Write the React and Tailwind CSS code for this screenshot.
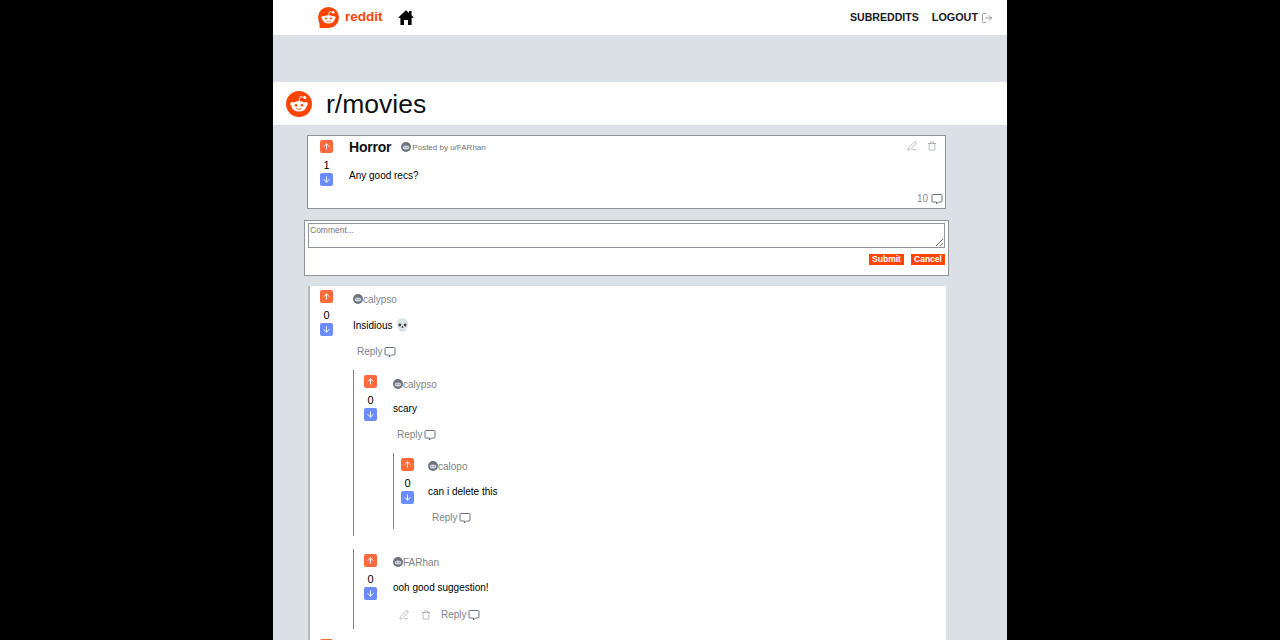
import React from "react";
import { ArrowUp, ArrowDown, PenLine, Trash, LogOut } from "lucide-react";

function Snoo({ size, bubble }) {
  return (
    <svg width={size} height={size} viewBox="0 0 40 40">
      <circle cx="20" cy="20" r="20" fill="#ff4500" />
      {bubble && <path d="M3 24 L3 39 Q3 40 5 40 L22 40 Z" fill="#ff4500" />}
      <circle cx="9.5" cy="20" r="3" fill="#fff" />
      <circle cx="30.5" cy="20" r="3" fill="#fff" />
      <ellipse cx="20" cy="23.5" rx="11.5" ry="8" fill="#fff" />
      <path d="M20 16 L22 8.5 L28 10" fill="none" stroke="#fff" strokeWidth="1.4" />
      <circle cx="29" cy="10" r="2.4" fill="#fff" />
      <circle cx="15.5" cy="22" r="2" fill="#ff4500" />
      <circle cx="24.5" cy="22" r="2" fill="#ff4500" />
      <path d="M15.5 27 Q20 29.5 24.5 27" fill="none" stroke="#ff4500" strokeWidth="1.2" />
    </svg>
  );
}

function HomeIcon() {
  return (
    <svg width="16" height="15" viewBox="0 0 16 15" fill="#000" className="ml-[15px]">
      <path d="M8 0.3 L11 3 V1 H13.5 V5.3 L16 7.8 H13.6 V15 H10 V10 H6 V15 H2.4 V7.8 H0 Z" />
    </svg>
  );
}

function UserDot() {
  return (
    <svg width="10" height="10" viewBox="0 0 20 20" className="shrink-0 mt-[-2px]">
      <circle cx="10" cy="10" r="10" fill="#6b7280" />
      <ellipse cx="10" cy="11" rx="6.5" ry="4" fill="#d1d5db" />
      <circle cx="7.5" cy="10.5" r="1.1" fill="#6b7280" />
      <circle cx="12.5" cy="10.5" r="1.1" fill="#6b7280" />
    </svg>
  );
}

function Bubble({ className }) {
  return (
    <svg width="12" height="12" viewBox="0 0 12 12" fill="none" stroke="currentColor" strokeWidth="1" className={className}>
      <path d="M2 1.5 H10 Q11 1.5 11 2.5 V8 Q11 9 10 9 H7.5 L5.5 11 V9 H2 Q1 9 1 8 V2.5 Q1 1.5 2 1.5 Z" />
    </svg>
  );
}

function UpButton() {
  return (
    <button className="w-[13px] h-[13px] rounded-[2px] bg-[#ff6a3d] flex items-center justify-center">
      <ArrowUp size={9} color="#fff" strokeWidth={2.5} />
    </button>
  );
}

function Votes({ count }) {
  return (
    <div className="flex flex-col items-center shrink-0 w-[13px]">
      <UpButton />
      <span className="h-5 pt-[5px] flex items-center text-[11px] leading-none text-black">{count}</span>
      <button className="w-[13px] h-[13px] rounded-[2px] bg-[#6b8cff] flex items-center justify-center">
        <ArrowDown size={9} color="#fff" strokeWidth={2.5} />
      </button>
    </div>
  );
}

function Comment({ author, text, owner, gap, nameGap = "mt-[3px]", textGap = "mt-[11px]", children }) {
  return (
    <div className="flex items-start">
      <Votes count="0" />
      <div className={`flex-1 ${gap}`}>
        <div className={`flex items-center h-[13px] ${nameGap} text-[10px] text-[#818384]`}>
          <UserDot />
          <span>{author}</span>
        </div>
        <p className={`${textGap} h-[13px] text-[10px] leading-[13px] text-black`}>{text}</p>
        <div className={`flex items-center h-[13px] text-[10px] text-[#818384] ${owner ? "ml-[6px] mt-[14px]" : "ml-[4px] mt-[13px]"}`}>
          {owner && (
            <span className="flex items-center gap-[12px] mr-[10px] text-[#777c81]">
              <PenLine size={10} strokeWidth={1.2} />
              <Trash size={10} strokeWidth={1.2} />
            </span>
          )}
          <span>Reply</span>
          <Bubble className="ml-[1px] text-[#6b7280]" />
        </div>
        {children}
      </div>
    </div>
  );
}

export default function App() {
  return (
    <div className="h-[640px] bg-black flex justify-center overflow-hidden font-['Liberation_Sans',Arial,sans-serif]">
      <div className="w-[734px] bg-[#dae0e6]">
        {/* nav */}
        <header className="h-[35px] bg-white flex items-center pl-[45px] pr-[14px]">
          <Snoo size={21} bubble />
          <span className="ml-[6px] text-[13.5px] font-bold text-[#ff4500]">reddit</span>
          <HomeIcon />
          <div className="ml-auto flex items-center gap-[13px] text-[10.6px] font-bold text-[#1a1a1b]">
            <span>SUBREDDITS</span>
            <span className="flex items-center gap-[3px] text-[10.8px]">
              LOGOUT <LogOut size={12} strokeWidth={1.2} className="text-[#555b61]" />
            </span>
          </div>
        </header>

        {/* subreddit banner */}
        <div className="mt-[47px] h-[43px] bg-white flex items-center pl-[13px]">
          <Snoo size={26} />
          <h1 className="ml-[14px] mt-[2px] text-[26.5px] font-normal text-[#111]">r/movies</h1>
        </div>

        {/* post */}
        <div className="relative mt-[10px] ml-[34px] w-[639px] h-[74px] bg-white border border-[#8f959b] flex pl-[12px] pt-[4px]">
          <Votes count="1" />
          <div className="ml-[16px]">
            <div className="flex items-center h-[14px]">
              <h2 className="text-[14px] tracking-[-0.2px] font-bold text-[#111]">Horror</h2>
              <span className="ml-[10px] mt-[1px] flex items-center gap-[1px] text-[8px] text-[#6f7377]">
                <UserDot /> Posted by u/FARhan
              </span>
            </div>
            <p className="mt-[14px] text-[10px] text-black">Any good recs?</p>
          </div>
          <div className="absolute top-[5px] right-[8px] flex gap-[10px] text-[#777c81]">
            <PenLine size={10} strokeWidth={1.2} />
            <Trash size={10} strokeWidth={1.2} />
          </div>
          <div className="absolute bottom-[3px] right-[2px] flex items-center gap-[3px] text-[10px] leading-none text-[#8a8f94]">
            10 <Bubble className="text-[#6b7280]" />
          </div>
        </div>

        {/* comment form */}
        <div className="mt-[11px] ml-[31px] w-[645px] h-[56px] bg-white border border-[#8f959b] px-[3px] pt-[2px]">
          <textarea
            placeholder="Comment..."
            className="block w-[637px] h-[25px] border border-[#8f959b] px-[1px] py-[1px] text-[8.5px] leading-[10px] placeholder:text-[#757575] outline-none"
          />
          <div className="mt-[6px] flex justify-end gap-[7px]">
            <button className="w-[35px] h-[11px] bg-[#ff4500] text-white text-[8.5px] font-bold leading-none">Submit</button>
            <button className="w-[34px] h-[11px] bg-[#ff4500] text-white text-[8.5px] font-bold leading-none">Cancel</button>
          </div>
        </div>

        {/* comments */}
        <div className="mt-[10px] ml-[35px] w-[638px] h-[400px] bg-white border-l-2 border-[#b4b9be] pl-[10px] pt-[4px] flex flex-col gap-[10px]">
          <Comment author="calypso" text={<>Insidious <span className="text-[12px]">💀</span></>} gap="ml-[20px]" textGap="mt-[13px]">
            <div className="mt-[12px] border-l border-[#818384] h-[166px] pl-[10px] pt-[5px]">
              <Comment author="calypso" text="scary" gap="ml-[16px]">
                <div className="mt-[12px] border-l border-[#818384] h-[76px] pl-[7px] pt-[5px]">
                  <Comment author="calopo" text="can i delete this" gap="ml-[14px]" nameGap="mt-[2px]" textGap="mt-[12px]" />
                </div>
              </Comment>
            </div>
            <div className="mt-[13px] border-l border-[#818384] h-[80px] pl-[10px] pt-[5px]">
              <Comment author="FARhan" text="ooh good suggestion!" owner gap="ml-[16px]" nameGap="mt-[2px]" textGap="mt-[12px]" />
            </div>
          </Comment>
          <UpButton />
        </div>
      </div>
    </div>
  );
}
